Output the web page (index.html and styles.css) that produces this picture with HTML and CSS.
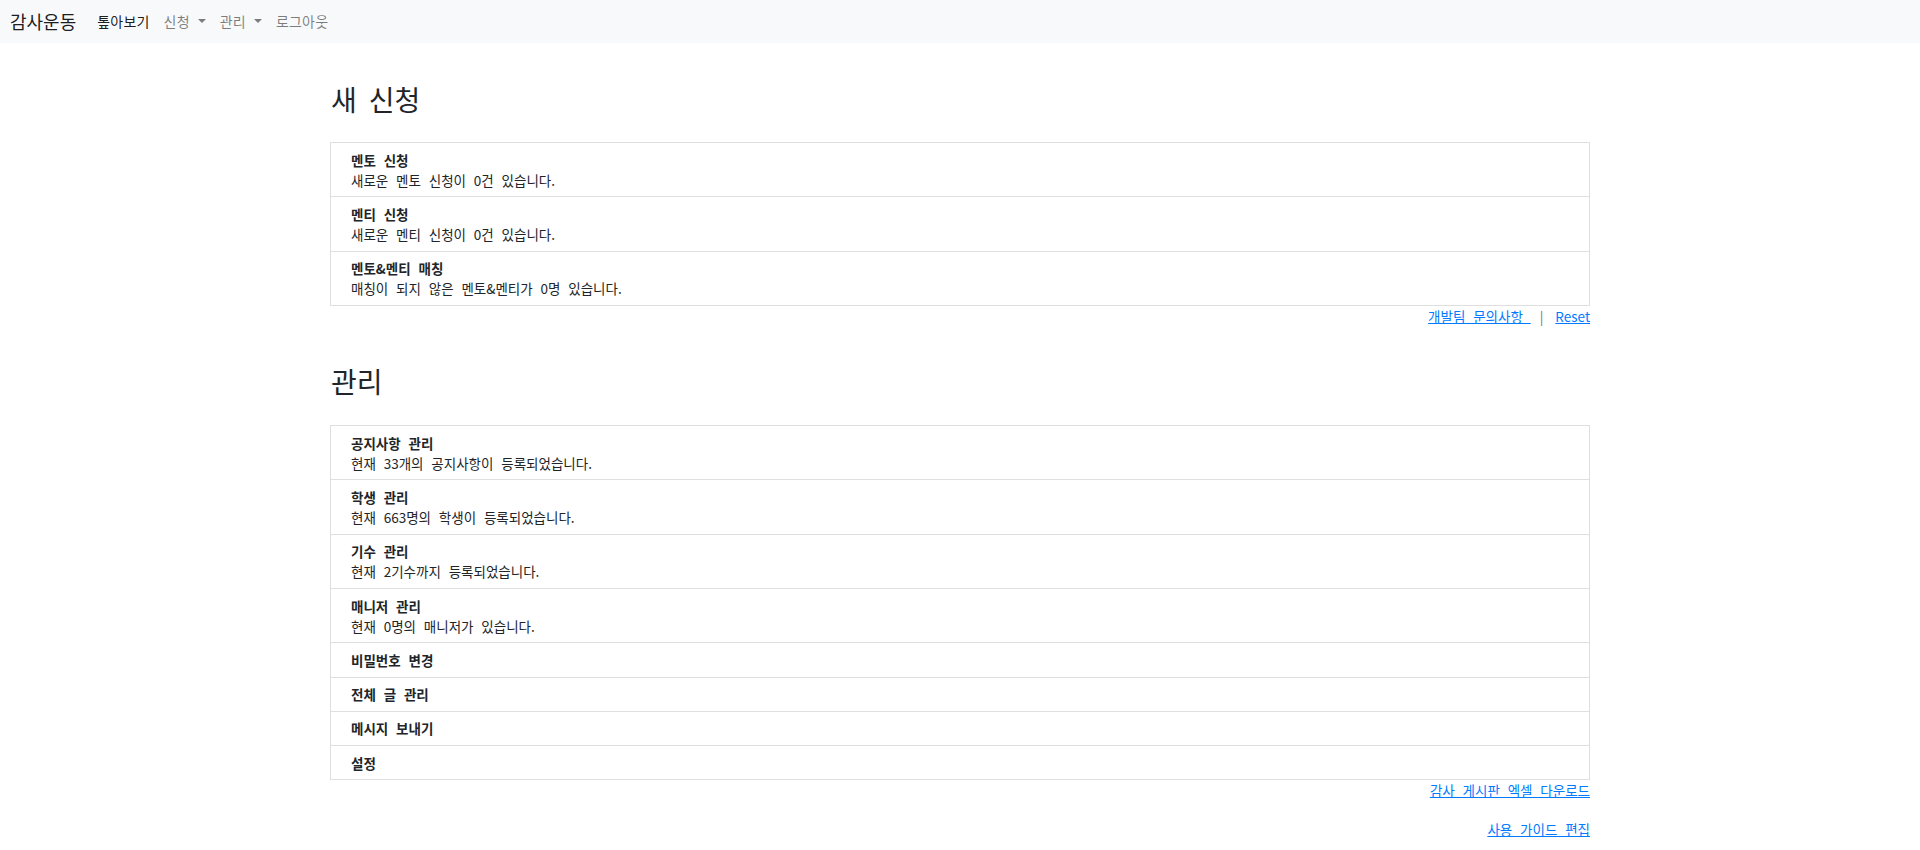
FILE: index.html
```html
<!DOCTYPE html>
<html lang="ko">
<head>
<meta charset="utf-8">
<title>감사운동</title>
<link rel="stylesheet" href="styles.css">
</head>
<body>
<nav class="navbar">
  <a class="brand" href="#">감사운동</a>
  <ul class="nav">
    <li><a class="nav-link active" href="#">톺아보기</a></li>
    <li><a class="nav-link dropdown" href="#">신청</a></li>
    <li><a class="nav-link dropdown" href="#">관리</a></li>
    <li><a class="nav-link" href="#">로그아웃</a></li>
  </ul>
</nav>
<main class="container">
  <section class="section first">
    <h2 class="title">새 신청</h2>
    <div class="list">
      <a class="item" href="#"><strong>멘토 신청</strong><span>새로운 멘토 신청이 0건 있습니다.</span></a>
      <a class="item" href="#"><strong>멘티 신청</strong><span>새로운 멘티 신청이 0건 있습니다.</span></a>
      <a class="item" href="#"><strong>멘토&amp;멘티 매칭</strong><span>매칭이 되지 않은 멘토&amp;멘티가 0명 있습니다.</span></a>
    </div>
    <div class="links">
      <a href="#">개발팀 문의사항 </a><span class="sep">|</span><a href="#">Reset</a>
    </div>
  </section>
  <section class="section">
    <h2 class="title">관리</h2>
    <div class="list">
      <a class="item" href="#"><strong>공지사항 관리</strong><span>현재 33개의 공지사항이 등록되었습니다.</span></a>
      <a class="item" href="#"><strong>학생 관리</strong><span>현재 663명의 학생이 등록되었습니다.</span></a>
      <a class="item" href="#"><strong>기수 관리</strong><span>현재 2기수까지 등록되었습니다.</span></a>
      <a class="item" href="#"><strong>매니저 관리</strong><span>현재 0명의 매니저가 있습니다.</span></a>
      <a class="item" href="#"><strong>비밀번호 변경</strong></a>
      <a class="item" href="#"><strong>전체 글 관리</strong></a>
      <a class="item" href="#"><strong>메시지 보내기</strong></a>
      <a class="item" href="#"><strong>설정</strong></a>
    </div>
    <div class="links">
      <a href="#">감사 게시판 엑셀 다운로드</a>
    </div>
    <div class="links guide">
      <a href="#">사용 가이드 편집</a>
    </div>
  </section>
</main>
</body>
</html>
```

FILE: styles.css
```css
* { box-sizing: border-box; }
html, body {
  margin: 0;
  padding: 0;
  background: #fff;
  color: #212529;
  font-family: "Noto Sans CJK KR", "Noto Sans", sans-serif;
  font-size: 13.5px;
  line-height: 20px;
  word-spacing: 0.3em;
}
a { text-decoration: none; }

.navbar {
  height: 43px;
  background: #f8f9fa;
  display: flex;
  align-items: center;
  padding: 0 0 2px 10px;
}
.brand {
  font-size: 18px;
  line-height: 24px;
  color: rgba(0,0,0,.9);
  margin-right: 14px;
}
.nav {
  list-style: none;
  margin: 0;
  padding: 0;
  display: flex;
}
.nav-link {
  display: flex;
  align-items: center;
  padding: 0 7px;
  font-size: 14px;
  letter-spacing: 0.2px;
  color: rgba(0,0,0,.5);
}
.nav-link.active { color: rgba(0,0,0,.9); }
.nav-link.dropdown::after {
  content: "";
  display: inline-block;
  margin-left: 8px;
  border-top: 4px solid rgba(0,0,0,.5);
  border-left: 4px solid transparent;
  border-right: 4px solid transparent;
  margin-top: 1px;
}

.container {
  width: 1260px;
  margin: 0 auto;
}
.section { margin-top: 39px; }
.section.first { margin-top: 40px; }
.title {
  font-size: 28px;
  font-weight: 400;
  line-height: 32px;
  margin: 0 0 28px 1px;
  color: #212529;
}
.section.first .title { margin-bottom: 27px; }

.list {
  border: 1px solid #dfdfdf;
  display: flex;
  flex-direction: column;
}
.item {
  display: flex;
  flex-direction: column;
  padding: 6.67px 20px;
  color: #212529;
  border-top: 1px solid #dfdfdf;
}
.item:first-child { border-top: 0; }
.item strong { font-weight: 700; }

.links {
  text-align: right;
  line-height: 20px;
}
.links a {
  color: #007bff;
  text-decoration: underline;
  white-space: pre;
}
.sep {
  color: #6c757d;
  margin: 0 12px 0 9px;
}
.guide { margin-top: 19px; }
```
